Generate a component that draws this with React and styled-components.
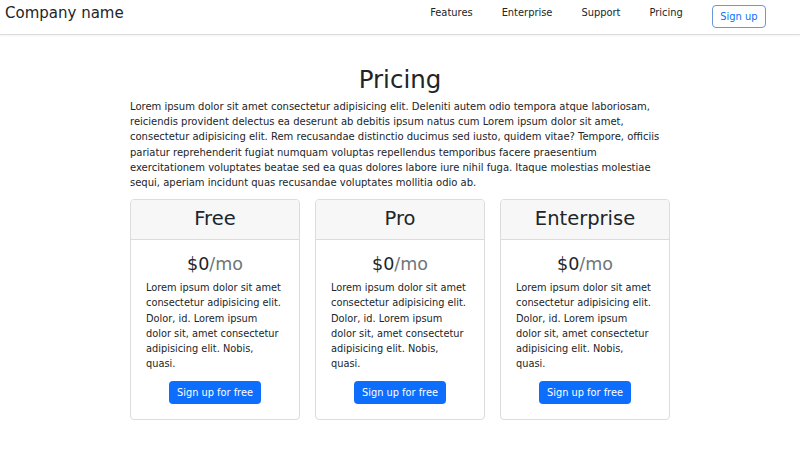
import React from "react";
import styled, { createGlobalStyle } from "styled-components";

const Global = createGlobalStyle`
  html, body { margin: 0; padding: 0; background: #fff; }
  body {
    font-family: "DejaVu Sans", "Liberation Sans", sans-serif;
    color: #212529;
  }
  * { box-sizing: border-box; }
`;

const Header = styled.header`
  display: flex;
  align-items: flex-start;
  height: 35px;
  padding: 0 34px 0 5px;
  border-bottom: 1px solid #dcdcdc;
  box-shadow: 0 1px 2px rgba(0, 0, 0, 0.05);
`;

const Brand = styled.div`
  font-size: 15px;
  line-height: 18px;
  margin-top: 4px;
  flex: 1;
`;

const Nav = styled.nav`
  display: flex;
  align-items: flex-start;
  gap: 29px;
`;

const NavLink = styled.a`
  font-size: 9.9px;
  line-height: 15px;
  margin-top: 4.5px;
  color: #212529;
  text-decoration: none;
`;

const OutlineButton = styled.a`
  display: block;
  margin-top: 5px;
  font-size: 9.9px;
  line-height: 15px;
  padding: 3px 7.5px;
  border: 1px solid #6a97d8;
  border-radius: 4px;
  color: #0d6efd;
  text-decoration: none;
`;

const Main = styled.main`
  width: 540px;
  margin: 0 auto;
  padding-top: 30px;
`;

const Title = styled.h1`
  margin: 0;
  text-align: center;
  font-weight: 400;
  font-size: 24.5px;
  line-height: 30px;
`;

const Intro = styled.p`
  margin: 4px 0 9px;
  font-size: 10px;
  line-height: 15.2px;
`;

const Cards = styled.div`
  display: grid;
  grid-template-columns: repeat(3, 1fr);
  gap: 15px;
`;

const Card = styled.div`
  display: flex;
  flex-direction: column;
  border: 1px solid #dcdcdc;
  border-radius: 4px;
  overflow: hidden;
`;

const CardHeader = styled.div`
  background: #f7f7f7;
  border-bottom: 1px solid #dcdcdc;
  height: 40px;
  display: flex;
  align-items: center;
  justify-content: center;
  font-size: 19.5px;
  padding-bottom: 3px;
`;

const CardBody = styled.div`
  flex: 1;
  display: flex;
  flex-direction: column;
  padding: 14px 15px 15px;
`;

const Price = styled.div`
  text-align: center;
  font-size: 17.5px;
  line-height: 21px;
`;

const Per = styled.span`
  color: #707579;
`;

const CardText = styled.p`
  margin: 5px 0 10px;
  font-size: 9.8px;
  line-height: 15.2px;
`;

const PrimaryButton = styled.a`
  align-self: center;
  margin-top: auto;
  display: block;
  background: #0d6efd;
  color: #fff;
  font-size: 9.8px;
  line-height: 15px;
  padding: 4px 8.5px;
  border-radius: 4px;
  text-decoration: none;
`;

const plans = ["Free", "Pro", "Enterprise"];

export default function App() {
  return (
    <>
      <Global />
      <Header>
        <Brand>Company name</Brand>
        <Nav>
          <NavLink href="#">Features</NavLink>
          <NavLink href="#">Enterprise</NavLink>
          <NavLink href="#">Support</NavLink>
          <NavLink href="#">Pricing</NavLink>
          <OutlineButton href="#">Sign up</OutlineButton>
        </Nav>
      </Header>
      <Main>
        <Title>Pricing</Title>
        <Intro>
          Lorem ipsum dolor sit amet consectetur adipisicing elit. Deleniti autem odio tempora atque laboriosam,
          reiciendis provident delectus ea deserunt ab debitis ipsum natus cum Lorem ipsum dolor sit amet,
          consectetur adipisicing elit. Rem recusandae distinctio ducimus sed iusto, quidem vitae? Tempore, officiis
          pariatur reprehenderit fugiat numquam voluptas repellendus temporibus facere praesentium
          exercitationem voluptates beatae sed ea quas dolores labore iure nihil fuga. Itaque molestias molestiae
          sequi, aperiam incidunt quas recusandae voluptates mollitia odio ab.
        </Intro>
        <Cards>
          {plans.map((p) => (
            <Card key={p}>
              <CardHeader>{p}</CardHeader>
              <CardBody>
                <Price>
                  $0<Per>/mo</Per>
                </Price>
                <CardText>
                  Lorem ipsum dolor sit amet consectetur adipisicing elit. Dolor, id. Lorem ipsum dolor sit, amet
                  consectetur adipisicing elit. Nobis, quasi.
                </CardText>
                <PrimaryButton href="#">Sign up for free</PrimaryButton>
              </CardBody>
            </Card>
          ))}
        </Cards>
      </Main>
    </>
  );
}
